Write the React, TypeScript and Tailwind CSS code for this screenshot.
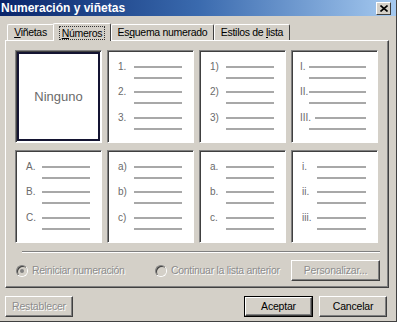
import React from 'react'

type Item = { label: string; lw: string; line1: string; line2: string; pad2: string }
type Cell = { none?: boolean; pl?: string; items?: Item[] }

const std = (label: string): Item => ({ label, lw: 'w-[16px]', line1: 'w-[48px]', line2: 'w-[48px]', pad2: 'w-[16px]' })

const cells: Cell[] = [
  { none: true },
  { pl: 'pl-[10px]', items: ['1.', '2.', '3.'].map(std) },
  { pl: 'pl-[10px]', items: ['1)', '2)', '3)'].map(std) },
  {
    pl: 'pl-[8px]',
    items: [
      { label: 'I.', lw: 'w-[9px]', line1: 'w-[57px]', line2: 'w-[57px]', pad2: 'w-[9px]' },
      { label: 'II.', lw: 'w-[9px]', line1: 'w-[57px]', line2: 'w-[57px]', pad2: 'w-[9px]' },
      { label: 'III.', lw: 'w-[15px]', line1: 'w-[51px]', line2: 'w-[57px]', pad2: 'w-[9px]' },
    ],
  },
  { pl: 'pl-[10px]', items: ['A.', 'B.', 'C.'].map(std) },
  { pl: 'pl-[10px]', items: ['a)', 'b)', 'c)'].map(std) },
  { pl: 'pl-[10px]', items: ['a.', 'b.', 'c.'].map(std) },
  {
    pl: 'pl-[10px]',
    items: ['i.', 'ii.', 'iii.'].map((label) => ({ label, lw: 'w-[15px]', line1: 'w-[49px]', line2: 'w-[49px]', pad2: 'w-[15px]' })),
  },
]

function ListCell({ cell }: { cell: Cell }) {
  if (cell.none) {
    return (
      <div className="w-[87px] h-[93px] bg-white border border-t-[#808080] border-l-[#808080] border-r-white border-b-white shadow-[inset_1px_1px_0_#404040] p-[1px]">
        <div className="w-full h-full border-2 border-[#141432] flex items-center justify-center text-[13px] text-[#6a6a6a]">
          Ninguno
        </div>
      </div>
    )
  }
  return (
    <div className={`w-[87px] h-[93px] bg-white border border-t-[#808080] border-l-[#808080] border-r-white border-b-white shadow-[inset_1px_1px_0_#404040] pt-[10px] ${cell.pl}`}>
      {cell.items!.map((it) => (
        <div key={it.label} className="flex flex-col h-[25.5px]">
          <div className="flex items-center h-[11px]">
            <span className={`${it.lw} text-[10px] leading-none text-[#6a6a6a] shrink-0`}>{it.label}</span>
            <div className={`${it.line1} h-[2px] bg-[#a8a8a8]`} />
          </div>
          <div className="flex items-center h-[11px]">
            <span className={`${it.pad2} shrink-0`} />
            <div className={`${it.line2} h-[2px] bg-[#a8a8a8]`} />
          </div>
        </div>
      ))}
    </div>
  )
}

function Radio({ checked }: { checked?: boolean }) {
  return (
    <span className="w-[12px] h-[12px] rounded-full border border-t-[#808080] border-l-[#808080] border-r-white border-b-white bg-[#c8c4bc] flex items-center justify-center shrink-0">
      <span className="w-[10px] h-[10px] rounded-full bg-[#d4d0c8] shadow-[inset_1px_1px_0_#404040] flex items-center justify-center">
        {checked && <span className="w-[4px] h-[4px] rounded-full bg-[#808080]" />}
      </span>
    </span>
  )
}

const btn =
  'h-[21px] bg-[#d4d0c8] border border-t-white border-l-white border-r-[#404040] border-b-[#404040] shadow-[inset_-1px_-1px_0_#808080] flex items-center justify-center text-[10.5px] tracking-[-0.2px] whitespace-nowrap'

const disabledText = 'text-[#8c8c8c] [text-shadow:1px_1px_0_#ffffff]'

const tab =
  'h-[16px] border-t border-l border-white border-r border-r-[#404040] rounded-t-[2px] flex items-center justify-center text-[10.5px] tracking-[-0.3px] text-black whitespace-nowrap'

export default function App() {
  return (
    <div className="w-[400px] h-[330px] bg-white font-['Liberation_Sans',Arial,sans-serif] overflow-hidden">
      <div className="w-[397px] h-[322px] bg-[#d4d0c8] border-r border-b border-[#404040] flex flex-col">
        {/* title bar */}
        <div className="h-[16px] bg-gradient-to-r from-[#0a246a] via-[#3a6aae] to-[#a6caf0] flex items-center justify-between">
          <span className="pl-[1px] text-white font-bold text-[12px] leading-none">Numeración y viñetas</span>
          <div className="mr-[5px] w-[15px] h-[13px] bg-[#d4d0c8] border border-t-white border-l-white border-r-[#404040] border-b-[#404040] flex items-center justify-center">
            <svg width="8" height="7" viewBox="0 0 8 7">
              <path d="M0.5 0.5 L7.5 6.5 M7.5 0.5 L0.5 6.5" stroke="#000" strokeWidth="1.6" />
            </svg>
          </div>
        </div>

        {/* tabs */}
        <div className="flex items-end h-[24px] pl-[7px]">
          <div className={`${tab} w-[47px]`}>
            <span><span className="underline">V</span>iñetas</span>
          </div>
          <div className={`${tab} h-[18px] w-[58px] -ml-[1px] relative z-10 mb-[-1px] bg-[#d4d0c8]`}>
            <span className="border border-dotted border-[#333] px-[2px] leading-[12px]"><span className="underline">N</span>úmeros</span>
          </div>
          <div className={`${tab} w-[103px]`}>
            <span>Es<span className="underline">q</span>uema numerado</span>
          </div>
          <div className={`${tab} w-[76px]`}>
            <span>Estilos de <span className="underline">l</span>ista</span>
          </div>
        </div>

        {/* panel */}
        <div className="ml-[5px] w-[384px] h-[248px] border border-t-white border-l-white border-r-[#404040] border-b-[#404040] shadow-[inset_-1px_-1px_0_#808080] pt-[9px] pl-[9px] flex flex-col">
          <div className="grid grid-cols-[repeat(4,87px)] gap-x-[5px] gap-y-[7px]">
            {cells.map((c, i) => (
              <ListCell key={i} cell={c} />
            ))}
          </div>
          <div className="mt-[8px] ml-[7px] w-[358px] h-[2px] border-t border-[#808080] border-b border-b-white" />
          <div className="mt-[7px] flex items-center">
            <div className="flex items-center gap-[4px] ml-[1px] w-[139px]">
              <Radio checked />
              <span className={`text-[10.5px] tracking-[-0.3px] whitespace-nowrap ${disabledText}`}>Reiniciar numeración</span>
            </div>
            <div className="flex items-center gap-[4px] w-[135px]">
              <Radio />
              <span className={`text-[10.5px] tracking-[-0.3px] whitespace-nowrap ${disabledText}`}>Continuar la lista anterior</span>
            </div>
            <div className={`${btn} w-[89px] ml-[1px] ${disabledText}`}>Personalizar...</div>
          </div>
        </div>

        {/* bottom buttons */}
        <div className="flex items-center mt-[8px] pl-[5px]">
          <div className={`${btn} w-[68px] ${disabledText}`}>Restablecer</div>
          <div className="flex-1" />
          <div className="w-[69px] h-[21px] border border-black flex">
            <div className={`${btn} w-full h-full text-black`}>Aceptar</div>
          </div>
          <div className={`${btn} w-[68px] ml-[6px] mr-[9px] text-black`}>Cancelar</div>
        </div>
      </div>
    </div>
  )
}
